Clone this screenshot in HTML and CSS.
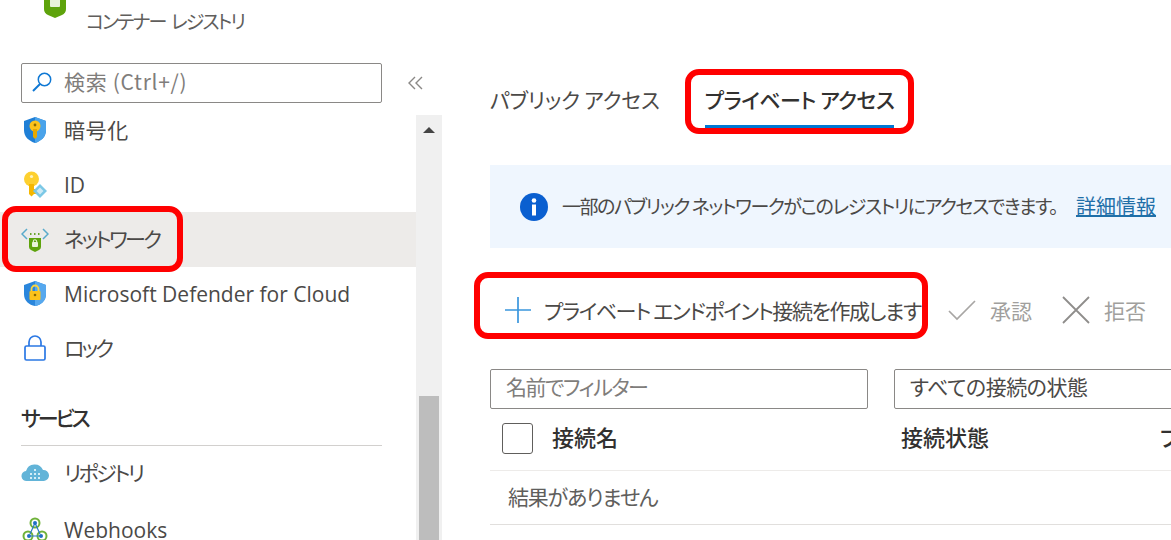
FILE: index.html
```html
<!DOCTYPE html>
<html lang="ja">
<head>
<meta charset="utf-8">
<title>ネットワーク</title>
<link rel="stylesheet" href="styles.css">
</head>
<body>
<div class="page">
  <aside class="side">
    <header class="head">
      <svg class="logo" width="22" height="30" viewBox="0 0 22 30"><path d="M0 0h22v20q0 4-4 6l-7 3-7-3q-4-2-4-6z" fill="#5ea30c"/><rect x="6" y="9" width="10" height="9" rx="1" fill="#e8f3d8"/><path d="M8 10V6a3 3 0 0 1 6 0v4" fill="none" stroke="#e8f3d8" stroke-width="1.6"/></svg>
      <div class="head-text">
        <div class="title">p</div>
        <div class="sub">コンテナー レジストリ</div>
      </div>
    </header>
    <div class="search-row">
      <div class="search">
        <svg width="22" height="22" viewBox="0 0 22 22"><circle cx="13.5" cy="8.5" r="6.2" fill="none" stroke="#0f78d4" stroke-width="1.5"/><path d="M9 13l-7 7" stroke="#0f78d4" stroke-width="2" fill="none"/></svg>
        <span>検索 (Ctrl+/)</span>
      </div>
      <svg class="collapse" width="16" height="14" viewBox="0 0 16 14"><path d="M7 1L1 7l6 6M14 1L8 7l6 6" fill="none" stroke="#8a8886" stroke-width="1.4"/></svg>
    </div>
    <div class="nav-wrap">
      <nav class="nav">
        <a class="item">
          <svg width="26" height="28" viewBox="0 0 26 28"><path d="M13 1l11 4v9c0 7-5 11-11 13C7 25 2 21 2 14V5z" fill="#1f7fd6"/><path d="M13 1l11 4v9c0 7-5 11-11 13z" fill="#4aa3ea"/><circle cx="13" cy="10" r="5.500" fill="#fcc21b"/><path d="M11 13h4v8l-2 2-2-2z" fill="#e6a800"/><circle cx="13" cy="9" r="1.400" fill="#8a6a00"/></svg>
          <span>暗号化</span>
        </a>
        <a class="item">
          <svg width="26" height="28" viewBox="0 0 26 28"><circle cx="9.500" cy="8" r="7.500" fill="#fdd02f"/><circle cx="9.500" cy="5.500" r="1.600" fill="#fff3c0"/><path d="M7 13h5v10l-2.500 2.500L7 23z" fill="#f5b700"/><path d="M12 18h3v2h-3zM12 21h2v2h-2z" fill="#f5b700"/><path d="M18 13l7 7-7 7-7-7z" fill="#7cc8e6"/><path d="M18 16.500l3.500 3.500-3.500 3.500-3.500-3.500z" fill="#cdeaf6"/></svg>
          <span>ID</span>
        </a>
        <a class="item active">
          <svg width="28" height="28" viewBox="0 0 28 28"><path d="M6 4L1 9l5 5M22 4l5 5-5 5" fill="none" stroke="#59aacb" stroke-width="1.500"/><path d="M9 9h1.500M13 9h1.500M17 9h1.500" stroke="#6aa52c" stroke-width="2"/><path d="M8 13h12v9q0 2-2 3l-4 2-4-2q-2-1-2-3z" fill="#5ea30c"/><rect x="11" y="17" width="6" height="5" rx="1" fill="#e8f3d8"/><path d="M12.300 17.500v-1a1.700 1.700 0 0 1 3.400 0v1" fill="none" stroke="#e8f3d8" stroke-width="1.100"/></svg>
          <span class="kana">ネットワーク</span>
        </a>
        <a class="item">
          <svg width="26" height="28" viewBox="0 0 26 28"><path d="M13 1l11 4v9c0 7-5 11-11 12C7 25 2 21 2 14V5z" fill="#2a86dc"/><path d="M13 1l11 4v9c0 7-5 11-11 12z" fill="#56a8ee"/><rect x="7.500" y="11" width="11" height="9" rx="1" fill="#fcc21b"/><path d="M9.500 11V9a3.500 3.500 0 0 1 7 0v2" fill="none" stroke="#fcd53f" stroke-width="1.800"/><circle cx="13" cy="15" r="1.300" fill="#8a6a00"/></svg>
          <span>Microsoft Defender for Cloud</span>
        </a>
        <a class="item">
          <svg width="26" height="28" viewBox="0 0 26 28"><rect x="3" y="12" width="20" height="14" rx="1.500" fill="#fff" stroke="#2b78e4" stroke-width="1.700"/><path d="M7 12V8a6 6 0 0 1 12 0v4" fill="none" stroke="#2b78e4" stroke-width="1.700"/></svg>
          <span class="kana short">ロック</span>
        </a>
        <h3 class="group">サービス</h3>
        <a class="item">
          <svg width="28" height="22" viewBox="0 0 28 22"><path d="M6 19a5 5 0 0 1-1-10 9 9 0 0 1 17-1 5.500 5.500 0 0 1 1 11z" fill="#62b4d8"/><g fill="#d5edf6"><rect x="9" y="11" width="2" height="2"/><rect x="13" y="11" width="2" height="2"/><rect x="17" y="11" width="2" height="2"/><rect x="9" y="15" width="2" height="2"/><rect x="13" y="15" width="2" height="2"/><rect x="17" y="15" width="2" height="2"/><rect x="13" y="7" width="2" height="2"/></g></svg>
          <span class="kana">リポジトリ</span>
        </a>
        <a class="item last">
          <svg width="26" height="26" viewBox="0 0 26 26"><g fill="none" stroke="#6fb23a" stroke-width="2"><circle cx="13" cy="6" r="4.500"/><circle cx="6" cy="19" r="4.500"/><circle cx="20" cy="19" r="4.500"/></g><path d="M13 6L8 17M13 6l5 11M7 19h12" fill="none" stroke="#2b78c8" stroke-width="1.200"/><g fill="#1f6fc4"><circle cx="13" cy="6" r="2"/><circle cx="7" cy="19" r="2"/><circle cx="19" cy="19" r="2"/></g></svg>
          <span>Webhooks</span>
        </a>
      </nav>
      <div class="scrollbar">
        <i class="arrow"></i>
        <i class="thumb"></i>
      </div>
    </div>
  </aside>

  <main class="main">
    <div class="tabs">
      <span class="tab">パブリック アクセス</span>
      <span class="tab on">プライベート アクセス</span>
    </div>
    <div class="info">
      <svg width="30" height="30" viewBox="0 0 30 30"><circle cx="15" cy="15" r="14" fill="#0a5fd0"/><rect x="13" y="12.500" width="4" height="11" fill="#fff"/><circle cx="15" cy="8.500" r="2.300" fill="#fff"/></svg>
      <span class="info-text">一部のパブリック ネットワークがこのレジストリにアクセスできます。</span>
      <a class="link">詳細情報</a>
    </div>
    <div class="toolbar">
      <div class="tool add">
        <svg width="28" height="28" viewBox="0 0 28 28"><path d="M14 1v26M1 14h26" stroke="#3a96dd" stroke-width="1.700" fill="none"/></svg>
        <span>プライベート エンドポイント接続を作成します</span>
      </div>
      <div class="tool off">
        <svg width="30" height="24" viewBox="0 0 30 24"><path d="M2 13l8 8L28 3" stroke="#a8a6a4" stroke-width="1.700" fill="none"/></svg>
        <span>承認</span>
      </div>
      <div class="tool off">
        <svg width="30" height="30" viewBox="0 0 30 30"><path d="M2 2l26 26M28 2L2 28" stroke="#8f8d8b" stroke-width="1.800" fill="none"/></svg>
        <span>拒否</span>
      </div>
    </div>
    <div class="filters">
      <div class="field name">名前でフィルター</div>
      <div class="field state">すべての接続の状態</div>
    </div>
    <div class="thead">
      <i class="check"></i>
      <span class="c1">接続名</span>
      <span class="c2">接続状態</span>
      <span class="c3">プライベート エンドポイント</span>
    </div>
    <div class="empty">結果がありません</div>
  </main>
</div>
<div class="mark m1"></div>
<div class="mark m2"></div>
<div class="mark m3"></div>
</body>
</html>
```
FILE: styles.css
```css
* { box-sizing: border-box; }
html, body { margin: 0; height: 540px; overflow: hidden; background: #fff; }
body { position: relative; font-family: "Noto Sans CJK JP", "Open Sans", sans-serif; font-feature-settings: "palt"; color: #323130; font-size: 21px; }
.page { display: flex; width: 1171px; height: 540px; overflow: hidden; }
.side { width: 442px; flex: none; display: flex; flex-direction: column; }
.head { height: 63px; flex: none; display: flex; padding-left: 44px; gap: 20px; overflow: hidden; }
.logo { margin-top: -11px; flex: none; }
.head-text { position: relative; flex: 1; }
.title { height: 10px; margin-top: -17px; padding-left: 227px; font: 600 24px/24px "Open Sans", sans-serif; overflow: hidden; color: #323130; }
.sub { margin-top: 15px; font-size: 19px; line-height: 26px; letter-spacing: -1.900px; word-spacing: 3px; color: #605e5c; white-space: nowrap; }
.search-row { height: 52px; flex: none; display: flex; padding-left: 21px; }
.search { width: 361px; height: 40px; border: 1.5px solid #8a8886; border-radius: 2px; display: flex; align-items: center; gap: 11px; padding: 0 0 5px 9px; color: #7f7d7b; font-size: 21px; letter-spacing: 0.700px; }
.search svg { flex: none; margin-top: 3px; }
.collapse { margin: 13px 0 0 26px; }
.nav-wrap { flex: 1; min-height: 0; display: flex; overflow: hidden; }
.nav { width: 416px; flex: none; margin-top: -13px; }
.item { display: flex; align-items: center; height: 54.500px; padding-left: 21px; gap: 15px; font-size: 21px; color: #4b4947; white-space: nowrap; font-family: "Open Sans", "Noto Sans CJK JP", sans-serif; }
.item svg { width: 28px; flex: none; }
.item span { line-height: 28px; }
.item .kana { letter-spacing: -2.600px; }
.item .short { letter-spacing: -3px; }
.item.active { background: #edebe9; }
.item.last { margin-top: 3px; }
.item:first-child { height: 55.500px; letter-spacing: 0.600px; }
.group { margin: 27px 0 0 21px; width: 361px; height: 43px; border-bottom: 1.5px solid #d2d0ce; font-size: 21px; line-height: 28px; font-weight: 500; letter-spacing: -3px; color: #323130; }
.scrollbar { width: 26px; flex: none; background: #f0f0f0; display: flex; flex-direction: column; align-items: center; }
.arrow { width: 0; height: 0; margin-top: 12px; border-left: 6px solid transparent; border-right: 6px solid transparent; border-bottom: 6px solid #444; }
.thumb { width: 20px; height: 144px; margin-top: 263px; background: #bdbdbd; flex: none; }
.main { flex: 1; min-width: 0; padding: 0 0 0 48px; overflow: hidden; }
.tabs { display: flex; height: 132px; padding-top: 83px; gap: 45px; white-space: nowrap; font-size: 21px; line-height: 32px; letter-spacing: -0.200px; }
.tab { height: 46px; color: #4b4947; }
.tab.on { font-weight: 500; color: #323130; border-bottom: 4px solid #0078d4; letter-spacing: -0.500px; }
.info { margin-top: 33px; width: 681px; height: 83px; background: #eff6fe; display: flex; align-items: center; padding: 0 0 3px 29px; white-space: nowrap; color: #4b4947; }
.info svg { flex: none; margin: 3px 13px 0 0; }
.info-text { font-size: 19px; letter-spacing: -1.450px; }
.link { margin-left: 19px; color: #1f6fa8; text-decoration: underline; font-size: 20px; }
.toolbar { margin-top: 24px; height: 76px; display: flex; align-items: center; white-space: nowrap; font-size: 21px; }
.tool { display: flex; align-items: center; }
.tool svg { flex: none; }
.add { margin-left: 14px; gap: 12px; color: #4b4947; }
.add span { width: 403px; letter-spacing: -1.400px; }
.off { color: #a19f9d; gap: 13px; font-size: 21px; }
.off + .off { margin-left: 29px; }
.filters { margin-top: 21px; display: flex; gap: 26px; white-space: nowrap; font-size: 21px; }
.field { height: 40px; border: 1.5px solid #8a8886; border-radius: 2px; display: flex; align-items: center; padding: 0 0 6px 15px; flex: none; }
.name { width: 378px; color: #7f7d7b; letter-spacing: -1.500px; }
.state { width: 320px; color: #4b4947; letter-spacing: -0.500px; }
.thead { display: flex; align-items: center; height: 62px; border-bottom: 1.500px solid #edebe9; white-space: nowrap; font-size: 22px; font-weight: 500; color: #323130; width: 720px; }
.check { width: 31px; height: 31px; border: 1.500px solid #605e5c; border-radius: 3px; margin: 0 19px 2px 12px; flex: none; }
.c1 { width: 349px; flex: none; padding-bottom: 7px; }
.c2 { width: 259px; flex: none; padding-bottom: 7px; }
.c3 { padding-bottom: 7px; }
.empty { height: 54px; padding: 0 0 3px 18px; border-bottom: 1.500px solid #e1dfdd; width: 720px; display: flex; align-items: center; color: #605e5c; font-size: 21px; letter-spacing: -1.200px; }
.mark { position: absolute; border: 6px solid #f00; border-radius: 14px; pointer-events: none; }
.m1 { left: 2px; top: 206px; width: 181px; height: 66px; }
.m2 { left: 685px; top: 69px; width: 229px; height: 65px; }
.m3 { left: 474px; top: 272px; width: 454px; height: 67px; }
```
